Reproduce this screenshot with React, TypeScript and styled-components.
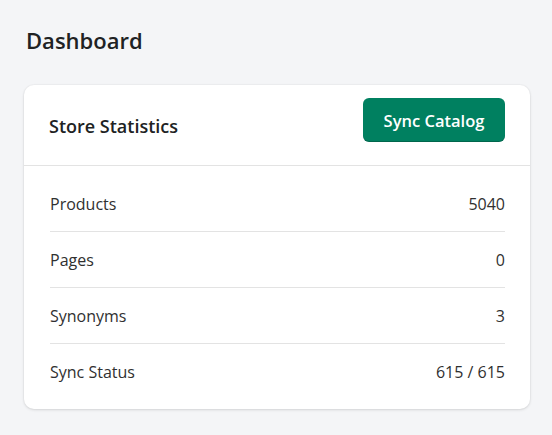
import React from 'react';
import styled, { createGlobalStyle } from 'styled-components';

const GlobalStyle = createGlobalStyle`
  html, body {
    margin: 0;
    padding: 0;
    background: #f4f5f7;
  }

  body {
    font-family: 'Open Sans', 'Noto Sans', sans-serif;
    color: #303030;
  }
`;

type Stat = {
  label: string;
  value: string;
};

const stats: Stat[] = [
  { label: 'Products', value: '5040' },
  { label: 'Pages', value: '0' },
  { label: 'Synonyms', value: '3' },
  { label: 'Sync Status', value: '615 / 615' },
];

const App: React.FC = () => {
  return (
    <>
      <GlobalStyle />
      <Page>
        <PageTitle>Dashboard</PageTitle>
        <Card>
          <CardHeader>
            <CardTitle>Store Statistics</CardTitle>
            <SyncButton type='button'>Sync Catalog</SyncButton>
          </CardHeader>
          <StatList>
            {stats.map((stat) => (
              <StatRow key={stat.label}>
                <StatLabel>{stat.label}</StatLabel>
                <StatValue>{stat.value}</StatValue>
              </StatRow>
            ))}
          </StatList>
        </Card>
      </Page>
    </>
  );
};

const Page = styled.main`
  padding: 24px 22px 26px 24px;
  display: flex;
  flex-direction: column;
`;

const PageTitle = styled.h1`
  margin: -1px 0 28px 2px;
  height: 34px;
  font-size: 22px;
  line-height: 34px;
  font-weight: 600;
  color: #202223;
`;

const Card = styled.section`
  background: #ffffff;
  border-radius: 10px;
  box-shadow: 0 1px 3px rgba(0, 0, 0, 0.12), 0 0 0 1px rgba(0, 0, 0, 0.02);
  overflow: hidden;
`;

const CardHeader = styled.header`
  display: flex;
  align-items: center;
  justify-content: space-between;
  padding: 13px 25px 23px 25px;
  border-bottom: 1px solid #e3e3e3;
`;

const CardTitle = styled.h2`
  margin: 12px 0 0 0;
  font-size: 18px;
  line-height: 24px;
  font-weight: 600;
  color: #202223;
`;

const SyncButton = styled.button`
  height: 44px;
  width: 142px;
  padding: 0;
  border: none;
  border-radius: 6px;
  background: #008060;
  color: #ffffff;
  font-family: inherit;
  font-size: 16.5px;
  font-weight: 600;
  cursor: pointer;
  box-shadow: inset 0 -1px 0 rgba(0, 0, 0, 0.2);
`;

const StatList = styled.div`
  padding: 10px 25px 9px 26px;
  display: flex;
  flex-direction: column;
`;

const StatRow = styled.div`
  height: 56px;
  display: flex;
  align-items: center;
  justify-content: space-between;
  border-bottom: 1px solid #e3e3e3;
  box-sizing: border-box;

  &:last-child {
    border-bottom: none;
  }
`;

const StatLabel = styled.span`
  font-size: 16px;
  font-weight: 400;
`;

const StatValue = styled.span`
  font-size: 16px;
  font-weight: 400;
`;

export default App;
